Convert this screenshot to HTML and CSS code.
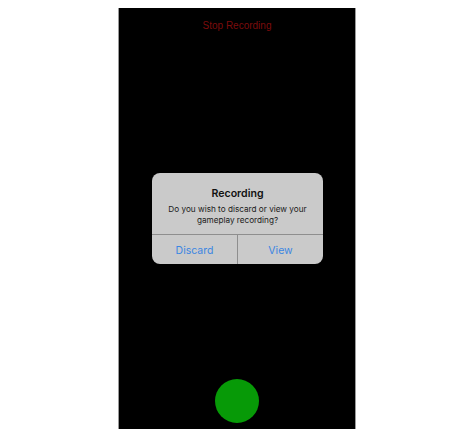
FILE: index.html
```html
<!DOCTYPE html>
<html>
<head>
<meta charset="utf-8">
<link rel="stylesheet" href="styles.css">
</head>
<body>
<div class="page">
  <div class="screen">
    <div class="stop">Stop Recording</div>
    <div class="spacer"></div>
    <div class="record-btn"></div>
    <div class="alert">
      <div class="alert-body">
        <div class="alert-title">Recording</div>
        <div class="alert-msg">Do you wish to discard or view your<br>gameplay recording?</div>
      </div>
      <div class="alert-actions">
        <div class="action">Discard</div>
        <div class="action">View</div>
      </div>
    </div>
  </div>
</div>
</body>
</html>
```

FILE: styles.css
```css
html, body {
  margin: 0;
  padding: 0;
  background: #ffffff;
}
.page {
  width: 474px;
  height: 437px;
  display: flex;
  justify-content: center;
  padding-top: 8px;
  box-sizing: border-box;
}
.screen {
  position: relative;
  width: 238px;
  height: 421px;
  background: #000;
  box-sizing: border-box;
  border-left: 1px solid #9a9a9a;
  border-right: 1px solid #9a9a9a;
  display: flex;
  flex-direction: column;
  align-items: center;
  font-family: "Inter", "Liberation Sans", sans-serif;
}
.stop {
  margin-top: 11px;
  font-family: "Liberation Sans", Arial, sans-serif;
  font-size: 10px;
  line-height: 14px;
  color: #7c0c0c;
}
.spacer {
  flex: 1;
}
.record-btn {
  width: 44px;
  height: 44px;
  border-radius: 50%;
  background: #079a07;
  margin-bottom: 6px;
}
.alert {
  position: absolute;
  left: 33px;
  top: 165px;
  width: 171px;
  height: 91px;
  border-radius: 8px;
  background: #cacaca;
  display: flex;
  flex-direction: column;
  overflow: hidden;
}
.alert-body {
  height: 62px;
  box-sizing: border-box;
  padding-top: 12px;
  text-align: center;
  border-bottom: 1px solid #8e8e8e;
}
.alert-title {
  margin-top: 2px;
  font-size: 10.6px;
  font-weight: 600;
  line-height: 14px;
  color: #111;
}
.alert-msg {
  margin-top: 3px;
  font-size: 8.2px;
  line-height: 11px;
  color: #1a1a1a;
}
.alert-actions {
  flex: 1;
  display: flex;
}
.action {
  flex: 1;
  display: flex;
  align-items: center;
  justify-content: center;
  padding-top: 1px;
  font-size: 10.5px;
  color: #3b86e2;
}
.action + .action {
  border-left: 1px solid #8e8e8e;
}
```
